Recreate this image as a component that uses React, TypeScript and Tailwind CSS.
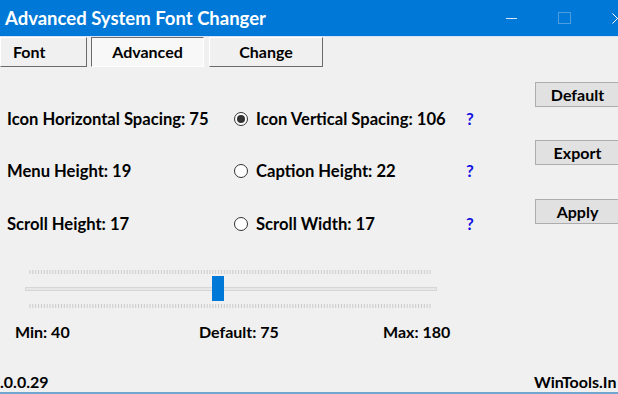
import { useState } from 'react';

const ROWS = [
  { left: 'Icon Horizontal Spacing: 75', right: 'Icon Vertical Spacing: 106' },
  { left: 'Menu Height: 19', right: 'Caption Height: 22' },
  { left: 'Scroll Height: 17', right: 'Scroll Width: 17' },
];

const TICKS = Array.from({ length: 141 }, (_, i) => 5 + (i * 400) / 140);

function Radio({ checked }: { checked: boolean }) {
  return (
    <span className="w-[14px] h-[14px] rounded-full border border-[#333] bg-white flex items-center justify-center">
      {checked && <span className="w-[8px] h-[8px] rounded-full bg-[#333]" />}
    </span>
  );
}

function Ticks() {
  return (
    <svg width="412" height="4" className="block">
      {TICKS.map((x) => (
        <line key={x} x1={x} x2={x} y1={0} y2={4} stroke="#c9c9c9" strokeWidth="1" />
      ))}
    </svg>
  );
}

export default function App() {
  const [selected, setSelected] = useState(0);

  return (
    <div className="w-[618px] h-[394px] overflow-hidden bg-[#f0f0f0] flex flex-col font-['Lato',sans-serif] font-bold text-black">
      <div className="h-[36px] shrink-0 bg-[#0078d7] flex items-center text-white">
        <div className="w-[485px] shrink-0 pl-[5px] text-[18.5px] leading-none">Advanced System Font Changer</div>
        <div className="w-[53px] shrink-0 flex justify-center">
          <span className="w-[11px] h-px bg-[#d6e8f8]" />
        </div>
        <div className="w-[53px] shrink-0 flex justify-center">
          <span className="w-[13px] h-[12px] border border-[#4d9de0]" />
        </div>
        <div className="w-[53px] shrink-0 flex justify-center">
          <svg width="11" height="11" viewBox="0 0 11 11">
            <path d="M0.5 0.5L10.5 10.5M10.5 0.5L0.5 10.5" stroke="#fff" strokeWidth="1" />
          </svg>
        </div>
      </div>
      <div className="h-px shrink-0 bg-[#d4e6f6]" />

      <div className="h-[30px] shrink-0 flex text-[16px]">
        <button className="w-[87px] h-full border border-t-white border-l-white border-r-[#6b6b6b] border-b-[#6b6b6b] bg-[#f0f0f0] flex items-center pl-[12px]">
          Font
        </button>
        <button className="ml-[4px] w-[113px] h-full border border-t-[#6b6b6b] border-l-[#6b6b6b] border-r-white border-b-white bg-[#f8f8f8] flex items-center justify-center">
          Advanced
        </button>
        <button className="ml-[5px] w-[114px] h-full border border-t-white border-l-white border-r-[#6b6b6b] border-b-[#6b6b6b] bg-[#f0f0f0] flex items-center justify-center">
          Change
        </button>
      </div>

      <div className="h-[305px] shrink-0 flex">
        <div className="w-[535px] shrink-0 flex flex-col text-[16.6px]">
          {ROWS.map((row, i) => (
            <div
              key={row.left}
              className={`h-[24px] flex items-center ${i === 0 ? 'mt-[40px]' : i === 1 ? 'mt-[28px]' : 'mt-[29px]'}`}
            >
              <span className="w-[234px] pl-[7px] whitespace-nowrap">{row.left}</span>
              <button className="w-[22px] flex items-center" onClick={() => setSelected(i)}>
                <Radio checked={selected === i} />
              </button>
              <span className="w-[210px] whitespace-nowrap">{row.right}</span>
              <span className="text-[#1010e0] text-[17px]">?</span>
            </div>
          ))}

          <div className="relative mt-[30px] ml-[25px] w-[412px] h-[46px] flex flex-col">
            <div className="mt-[4px]">
              <Ticks />
            </div>
            <div className="mt-[13px] h-[4px] bg-[#e7e7e7] border border-[#d6d6d6]" />
            <div className="mt-[13px]">
              <Ticks />
            </div>
            <div className="absolute left-[187px] top-[10px] w-[12px] h-[25px] bg-[#0078d7]" />
          </div>

          <div className="mt-[10px] h-[20px] flex items-center pl-[15px] text-[16px]">
            <span className="w-[184px]">Min: 40</span>
            <span className="w-[184px]">Default: 75</span>
            <span>Max: 180</span>
          </div>
        </div>

        <div className="w-[85px] shrink-0 flex flex-col text-[16px]">
          <button className="mt-[15px] h-[25px] bg-[#e1e1e1] border border-[#adadad] flex items-center justify-center">
            Default
          </button>
          <button className="mt-[33px] h-[25px] bg-[#e1e1e1] border border-[#adadad] flex items-center justify-center">
            Export
          </button>
          <button className="mt-[34px] h-[25px] bg-[#e1e1e1] border border-[#adadad] flex items-center justify-center">
            Apply
          </button>
        </div>
      </div>

      <div className="h-[20px] shrink-0 flex items-center text-[16px]">
        <span className="w-[534px] shrink-0">.0.0.29</span>
        <span className="whitespace-nowrap">WinTools.In</span>
      </div>
      <div className="h-[2px] shrink-0 bg-[#6fa6cf]" />
    </div>
  );
}
